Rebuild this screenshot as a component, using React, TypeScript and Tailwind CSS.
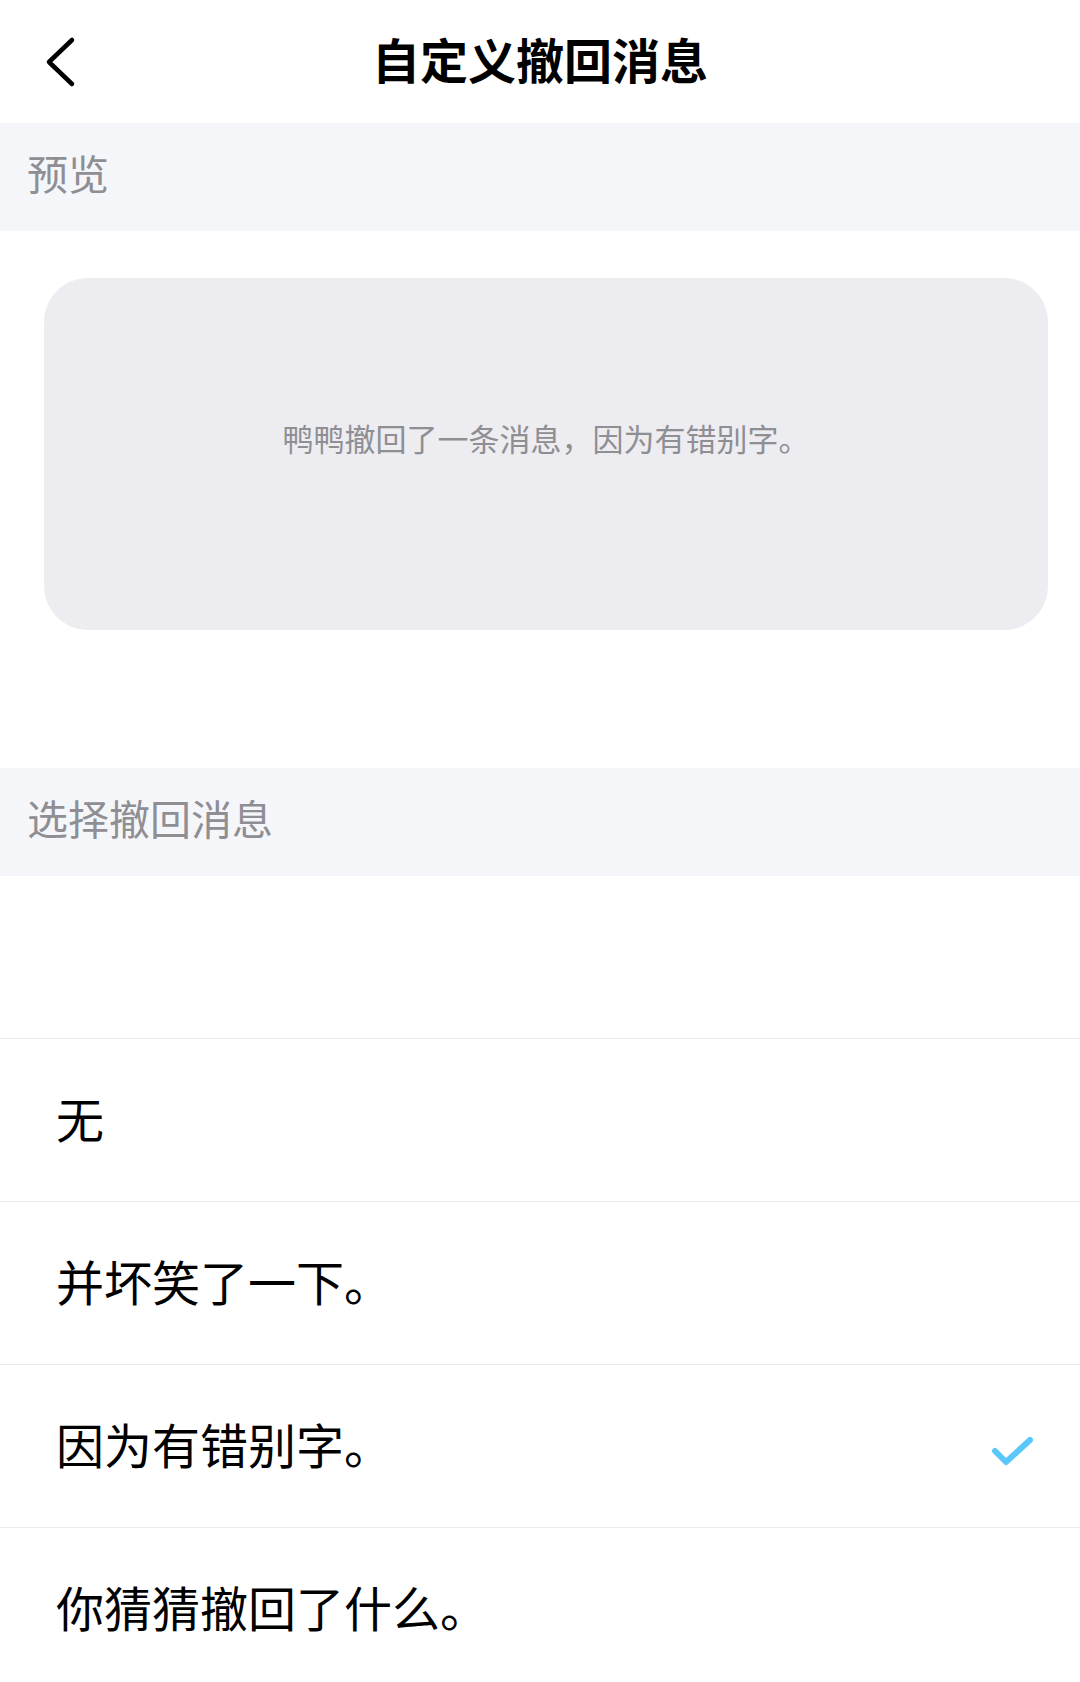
import React, { useState } from 'react';

const OPTIONS = ['无', '并坏笑了一下。', '因为有错别字。', '你猜猜撤回了什么。'];

const FONT = { fontFamily: '"Noto Sans CJK SC", "Noto Sans", sans-serif' };

function SectionHeader({ label }: { label: string }) {
  return (
    <div className="h-[108px] bg-[#f5f6fa] flex items-center pl-[27px] pb-[10px]">
      <span className="text-[41px] leading-none text-[#8e8e93]">{label}</span>
    </div>
  );
}

export default function App() {
  const [selected, setSelected] = useState(2);
  const suffix = selected === 0 ? '' : OPTIONS[selected];

  return (
    <div className="w-[1080px] min-h-[1682px] bg-white overflow-hidden [text-spacing-trim:space-all]" style={FONT}>
      {/* nav bar */}
      <div className="relative h-[123px] flex items-center justify-center">
        <button className="absolute left-[38px] top-[30px] p-1">
          <svg width="40" height="56" viewBox="0 0 40 56" fill="none">
            <polyline
              points="30,6 7,28 30,50"
              stroke="#000"
              strokeWidth="4.5"
              strokeLinecap="round"
              strokeLinejoin="round"
            />
          </svg>
        </button>
        <h1 className="text-[48px] font-bold leading-none text-black -mt-[8px]">自定义撤回消息</h1>
      </div>

      <SectionHeader label="预览" />

      <div className="pt-[47px] pb-[138px] pl-[44px] pr-[32px]">
        <div className="h-[352px] rounded-[44px] bg-[#ececf1] flex items-center justify-center pb-[34px]">
          <span className="text-[31px] leading-none text-[#8e8e93]">
            鸭鸭撤回了一条消息，{suffix}
          </span>
        </div>
      </div>

      <SectionHeader label="选择撤回消息" />

      <div className="h-[162px]" />

      <div className="border-t border-[#ebebeb]">
        {OPTIONS.map((opt, i) => (
          <div
            key={opt}
            onClick={() => setSelected(i)}
            className="h-[163px] flex items-center justify-between pl-[56px] pr-[46px] pb-[6px] border-b border-[#ebebeb] cursor-pointer"
          >
            <span className="text-[48px] leading-none text-black">{opt}</span>
            {selected === i && (
              <svg width="44" height="34" viewBox="0 0 44 34" fill="none" className="mt-[18px]">
                <polyline
                  points="5,16 16,27 40,5"
                  stroke="#5ac8fa"
                  strokeWidth="6"
                  strokeLinecap="round"
                  strokeLinejoin="round"
                />
              </svg>
            )}
          </div>
        ))}
      </div>
    </div>
  );
}
